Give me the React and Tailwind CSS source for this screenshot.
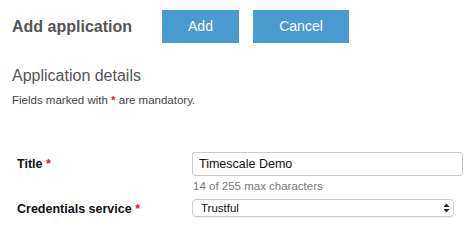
export default function App() {
  return (
    <div className="w-[474px] h-[231px] bg-white overflow-hidden font-['Liberation_Sans',Arial,sans-serif] text-[#555]">
      <div className="flex items-center pt-[10px] pl-[12px]">
        <h1 className="text-[16px] font-bold w-[150px]">Add application</h1>
        <button className="w-[77px] h-[33px] bg-[#4a9ad2] text-white text-[14px]">Add</button>
        <button className="ml-[14px] w-[96px] h-[33px] bg-[#4a9ad2] text-white text-[14px]">Cancel</button>
      </div>
      <div className="pl-[12px] mt-[23px]">
        <h2 className="text-[16px] leading-[20px]">Application details</h2>
        <p className="text-[11.5px] mt-[6px] text-[#444]">
          Fields marked with <span className="text-[#c0272d] font-bold">*</span> are mandatory.
        </p>
      </div>
      <div className="mt-[43px] pl-[17px] pr-[11px]">
        <div className="flex">
          <div className="w-[175px] pt-[3px] text-[12.5px] font-bold text-[#111]">
            Title <span className="text-[#c0272d]">*</span>
          </div>
          <div className="flex-1">
            <div className="h-[24px] border border-[#ccc] rounded-[3px] flex items-center px-[6px] text-[12.5px] text-[#111]">
              Timescale Demo
            </div>
            <div className="text-[11.5px] leading-[15px] text-[#777] mt-[3px] pl-[1px]">14 of 255 max characters</div>
          </div>
        </div>
        <div className="flex mt-[5px]">
          <div className="w-[175px] pt-[1px] text-[12.5px] font-bold text-[#111]">
            Credentials service <span className="text-[#c0272d]">*</span>
          </div>
          <div className="flex-1 pr-[9px]">
            <div className="h-[18px] border border-[#ccc] rounded-[4px] flex items-center justify-between pl-[8px] pr-[3px] text-[11.5px] text-[#111] shadow-[0_1px_1px_rgba(0,0,0,0.08)]">
              <span>Trustful</span>
              <svg width="7" height="10" viewBox="0 0 7 10">
                <path d="M3.5 0.5 L6.5 4 L0.5 4 Z" fill="#222" />
                <path d="M3.5 9.5 L6.5 6 L0.5 6 Z" fill="#222" />
              </svg>
            </div>
          </div>
        </div>
      </div>
    </div>
  );
}
